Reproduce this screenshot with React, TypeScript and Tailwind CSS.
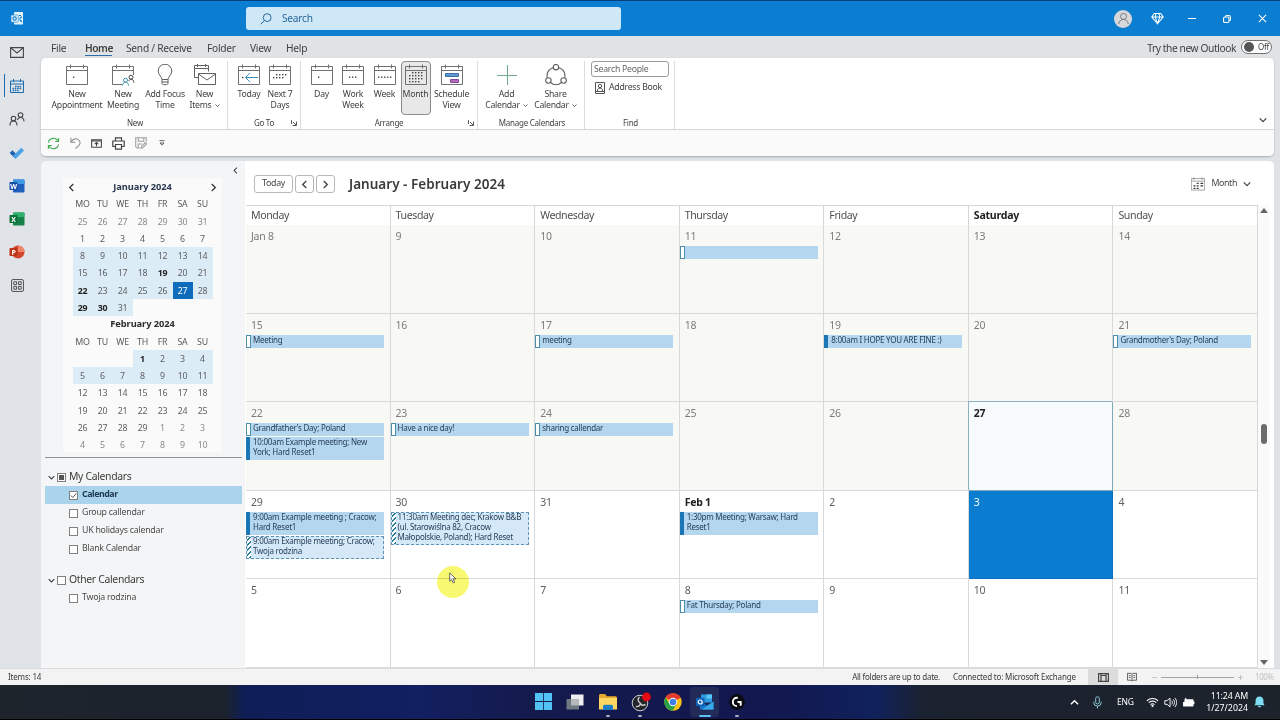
import type { ReactNode } from 'react';
import clsx from 'clsx';

type DayEvent = { text: string; kind: 'free' | 'busy' | 'tentative'; lines?: number };
type Day = { label: string; events?: DayEvent[] };

const WEEKDAYS = ['Monday', 'Tuesday', 'Wednesday', 'Thursday', 'Friday', 'Saturday', 'Sunday'];

const WEEKS: Day[][] = [
  [
    { label: 'Jan 8' },
    { label: '9' },
    { label: '10' },
    { label: '11', events: [{ text: '', kind: 'free' }] },
    { label: '12' },
    { label: '13' },
    { label: '14' },
  ],
  [
    { label: '15', events: [{ text: 'Meeting', kind: 'free' }] },
    { label: '16' },
    { label: '17', events: [{ text: 'meeting', kind: 'free' }] },
    { label: '18' },
    { label: '19', events: [{ text: '8:00am I HOPE YOU ARE FINE :)', kind: 'busy' }] },
    { label: '20' },
    { label: '21', events: [{ text: "Grandmother's Day; Poland", kind: 'free' }] },
  ],
  [
    {
      label: '22',
      events: [
        { text: "Grandfather's Day; Poland", kind: 'free' },
        { text: '10:00am Example meeting; New\nYork; Hard Reset1', kind: 'busy', lines: 2 },
      ],
    },
    { label: '23', events: [{ text: 'Have a nice day!', kind: 'free' }] },
    { label: '24', events: [{ text: 'sharing callendar', kind: 'free' }] },
    { label: '25' },
    { label: '26' },
    { label: '27' },
    { label: '28' },
  ],
  [
    {
      label: '29',
      events: [
        { text: '9:00am Example meeting ; Cracow;\nHard Reset1', kind: 'busy', lines: 2 },
        { text: '9:00am Example meeting; Cracow;\nTwoja rodzina', kind: 'tentative', lines: 2 },
      ],
    },
    {
      label: '30',
      events: [
        {
          text: '11:30am Meeting dec; Krakow B&B\n(ul. Starowiślna 82, Cracow\nMałopolskie, Poland); Hard Reset',
          kind: 'tentative',
          lines: 3,
        },
      ],
    },
    { label: '31' },
    { label: 'Feb 1', events: [{ text: '1:30pm Meeting; Warsaw; Hard\nReset1', kind: 'busy', lines: 2 }] },
    { label: '2' },
    { label: '3' },
    { label: '4' },
  ],
  [
    { label: '5' },
    { label: '6' },
    { label: '7' },
    { label: '8', events: [{ text: 'Fat Thursday; Poland', kind: 'free' }] },
    { label: '9' },
    { label: '10' },
    { label: '11' },
  ],
];

const JANUARY = [
  [25, 26, 27, 28, 29, 30, 31],
  [1, 2, 3, 4, 5, 6, 7],
  [8, 9, 10, 11, 12, 13, 14],
  [15, 16, 17, 18, 19, 20, 21],
  [22, 23, 24, 25, 26, 27, 28],
  [29, 30, 31, 0, 0, 0, 0],
];

const FEBRUARY = [
  [0, 0, 0, 1, 2, 3, 4],
  [5, 6, 7, 8, 9, 10, 11],
  [12, 13, 14, 15, 16, 17, 18],
  [19, 20, 21, 22, 23, 24, 25],
  [26, 27, 28, 29, 1, 2, 3],
  [4, 5, 6, 7, 8, 9, 10],
];

function Chevron({ dir, className }: { dir: 'left' | 'right' | 'down' | 'up'; className?: string }) {
  const d = {
    left: 'M7 1 3 5l4 4',
    right: 'M3 1l4 4-4 4',
    down: 'M1 3l4 4 4-4',
    up: 'M1 7l4-4 4 4',
  }[dir];
  return (
    <svg viewBox="0 0 10 10" className={clsx('shrink-0', className)} fill="none" stroke="currentColor" strokeWidth="1.5">
      <path d={d} />
    </svg>
  );
}

function CalendarIcon({ children, className = 'size-[22px]' }: { children?: ReactNode; className?: string }) {
  return (
    <svg viewBox="0 0 22 22" className={className} fill="none" stroke="#707070" strokeWidth="1">
      <path d="M.5 2.5h21v18H.5zM.5 6.5h21" />
      <path d="M4.5 .5v4M17.5 .5v4" />
      {children}
    </svg>
  );
}

function Dots({ xs, ys }: { xs: number[]; ys: number[] }) {
  return (
    <g fill="#444" stroke="none">
      {ys.flatMap((y) => xs.map((x) => <rect key={`${x}-${y}`} x={x} y={y} width="1.4" height="1.4" />))}
    </g>
  );
}

function RibbonButton({
  icon,
  lines,
  className,
  menu,
  active,
}: {
  icon: ReactNode;
  lines: string[];
  className: string;
  menu?: boolean;
  active?: boolean;
}) {
  return (
    <button
      className={clsx(
        'flex h-[54px] shrink-0 flex-col items-center rounded-[4px] border pt-[2px] text-[8.7px] leading-[11px]',
        active ? 'border-[#8a8a8a] bg-[#e8e8e8]' : 'border-transparent',
        className,
      )}
    >
      {icon}
      <span className="mt-[3px] whitespace-nowrap">{lines[0]}</span>
      {lines[1] && (
        <span className="flex items-center gap-[3px] whitespace-nowrap">
          {lines[1]}
          {menu && <Chevron dir="down" className="size-[5px]" />}
        </span>
      )}
    </button>
  );
}

function RibbonGroup({
  label,
  className,
  children,
  launcher,
}: {
  label: string;
  className: string;
  children: ReactNode;
  launcher?: boolean;
}) {
  return (
    <section className={clsx('flex h-[71px] shrink-0 flex-col pt-[3px]', className)}>
      <div className="flex h-[68px] flex-col border-r border-[#dcdcdc]">
        <div className="flex h-[56px] justify-center">{children}</div>
        <div className="flex h-[11px] items-center justify-center text-[8px] leading-[11px]">
          <span className={launcher ? 'ml-auto' : 'pl-[2px]'}>{label}</span>
          {launcher && (
            <span className="ml-auto flex w-0 justify-end">
              <svg viewBox="0 0 6 6" className="mr-[3px] size-[6px] shrink-0" fill="none" stroke="#444" strokeWidth=".9">
                <path d="M.5 4V.5H1M2 2l3 3M5.500 1.500v4h-4" />
              </svg>
            </span>
          )}
        </div>
      </div>
    </section>
  );
}

function TitleBar() {
  return (
    <header className="flex h-9 shrink-0 items-center border-t border-[#063f7c] bg-[#0b7ed1] text-white">
      <div className="flex w-[246px] items-center pl-[11px]">
        <svg viewBox="0 0 13 13" className="size-[13px]">
          <path d="M3 1c0-.6.4-1 1-1h7c.6 0 1 .4 1 1v10.500c0 .6-.4 1-1 1H4c-.6 0-1-.4-1-1z" fill="#e6f4fc" />
          <path d="M8 3.500h2M8.500 6.500l2.500-1.800M8.500 7.500 11 10" stroke="#0b7ed1" strokeWidth="1.100" />
          <rect x="0" y="3" width="7.200" height="7.200" rx=".8" fill="#e6f4fc" stroke="#0b7ed1" strokeWidth=".6" />
          <circle cx="3.600" cy="6.600" r="1.700" fill="none" stroke="#0b7ed1" strokeWidth="1.100" />
        </svg>
      </div>
      <div className="flex h-[23px] w-[375px] items-center gap-[10px] rounded-[3px] bg-[#cfe8f7] pl-[14px] text-[10.2px] text-[#2a6799]">
        <svg viewBox="0 0 12 12" className="size-3" fill="none" stroke="currentColor">
          <circle cx="7.200" cy="4.600" r="3.900" />
          <path d="M4.400 7.500.8 11.200" />
        </svg>
        Search
      </div>
      <div className="ml-auto flex items-center pr-[13px]">
        <div className="flex size-[18px] items-center justify-center rounded-full bg-[#d6d8da]">
          <svg viewBox="0 0 14 14" className="size-[13px]" fill="none" stroke="#70757a">
            <circle cx="7" cy="4.800" r="3.200" />
            <path d="M1.800 13c.4-3 2.400-5 5.200-5s4.800 2 5.200 5" />
          </svg>
        </div>
        <svg viewBox="0 0 14 14" className="ml-[19px] size-[13px]" fill="none" stroke="#fff" strokeWidth="1.1">
          <path d="M3.500 1.500h7l2.700 3.800L7 12.700.8 5.300zM.8 5.300h12.400M4.500 5.300 7 12.500l2.500-7.200L8.500 1.500M4.500 5.300l1-3.800" />
        </svg>
        <span className="ml-[24px] h-px w-[8px] bg-white" />
        <svg viewBox="0 0 10 10" className="ml-[27px] size-[8px]" fill="none" stroke="#fff" strokeWidth="1.400">
          <rect x=".7" y="2.500" width="6.800" height="6.800" rx="1.500" />
          <path d="M3 2.200C3 1.200 3.600.7 4.500.7h2.700c1.300 0 2.100.8 2.100 2.100v2.700c0 .9-.5 1.500-1.500 1.500" />
        </svg>
        <svg viewBox="0 0 10 10" className="ml-[27px] size-[9px]" fill="none" stroke="#fff" strokeWidth="1.200">
          <path d="m1 1 8 8M9 1 1 9" />
        </svg>
      </div>
    </header>
  );
}

function OfficeIcon({ letter, dark, mid, light, round }: { letter: string; dark: string; mid: string; light: string; round?: boolean }) {
  return (
    <svg viewBox="0 0 16 14" className="h-[14px] w-4">
      {round ? (
        <>
          <circle cx="9" cy="7" r="6.500" fill={mid} />
          <path d="M9 .5A6.500 6.500 0 0 1 15.500 7H9z" fill={light} />
        </>
      ) : (
        <>
          <rect x="4" y=".5" width="11.500" height="13" rx="1" fill={mid} />
          <path d="M4 1.500a1 1 0 0 1 1-1h9.500a1 1 0 0 1 1 1V5H4z" fill={light} />
        </>
      )}
      <rect x=".5" y="3" width="8" height="8" rx=".8" fill={dark} />
      <text x="4.600" y="9.500" fontSize="7" fontWeight="700" textAnchor="middle" fill="#fff">
        {letter}
      </text>
    </svg>
  );
}

function People({ className }: { className?: string }) {
  return (
    <svg viewBox="0 0 16 14" className={className} fill="none" stroke="currentColor" strokeWidth="1.100">
      <circle cx="4.500" cy="6.500" r="2.300" />
      <path d="M1 13.500c0-2.500 1.200-4.500 3.500-4.500S8 11 8 13.500" />
      <circle cx="11.500" cy="3" r="2.300" />
      <path d="M8.500 8c.4-1.500 1.500-2.500 3-2.500 2.200 0 3.500 1.800 3.500 4" />
    </svg>
  );
}

function AppRail() {
  const cell = 'flex h-[33.3px] w-full shrink-0 items-center justify-center';
  return (
    <nav className="flex w-[41px] shrink-0 flex-col bg-[#e0e4e8] pr-[7px] text-[#454545]">
      <div className={cell}>
        <svg viewBox="0 0 14 11" className="h-[11px] w-[14px]" fill="none" stroke="currentColor" strokeWidth="1.100">
          <path d="M.6.6h12.800v9.800H.6zM.8.8 7 6 13.200.8" />
        </svg>
      </div>
      <div className={clsx(cell, 'relative')}>
        <span className="absolute left-[4px] top-[5px] h-[23px] w-px bg-[#1c6cad]" />
        <svg viewBox="0 0 14 14" className="size-[14px]" fill="none" stroke="#1c6cad" strokeWidth="1">
          <path d="M.5 2h13v11.500H.5zM.5 5h13M3.500 0v3M10.500 0v3" />
          <path d="M5 7.500h7M2.500 9.500H12M2.500 11.500H9" strokeDasharray="1.500 .8" strokeWidth="1.400" />
        </svg>
      </div>
      <div className={cell}>
        <People className="h-[14px] w-4" />
      </div>
      <div className={cell}>
        <svg viewBox="0 0 16 12" className="h-[12px] w-4">
          <path d="M.7 6 3.400 3.300l5 5L5.700 11z" fill="#1c5fae" />
          <path d="M3.800 9.100 12.300.7 15 3.400 6.600 12z" fill="#4ba3e6" />
        </svg>
      </div>
      <div className={cell}>
        <OfficeIcon letter="W" dark="#174fa8" mid="#1e5fbe" light="#3e9ae6" />
      </div>
      <div className={cell}>
        <OfficeIcon letter="X" dark="#0e7039" mid="#15824a" light="#2fb26c" />
      </div>
      <div className={cell}>
        <OfficeIcon letter="P" dark="#bb3418" mid="#d2452b" light="#f08468" round />
      </div>
      <div className={cell}>
        <svg viewBox="0 0 14 14" className="size-[13px]" fill="none" stroke="currentColor" strokeWidth="1">
          <rect x=".6" y=".6" width="12.800" height="12.800" rx="1.500" />
          <path d="M3 3h3v3H3zM8 3h3v3H8zM3 8h3v3H3zM8 8h3v3H8z" />
        </svg>
      </div>
    </nav>
  );
}

function MenuTabs() {
  return (
    <div className="flex h-[22px] items-center pt-[2px] text-[10.2px] leading-[14px]">
      <span className="w-[34px] pl-[10px]">File</span>
      <span className="relative ml-[10px] w-[27px] font-semibold tracking-[-0.045em]">
        Home
        <i className="absolute inset-x-0 -bottom-px h-px bg-[#2d6fae]" />
      </span>
      <span className="ml-[14px] w-[81px]">Send / Receive</span>
      <span className="w-[43px]">Folder</span>
      <span className="w-[36px]">View</span>
      <span>Help</span>
      <span className="ml-auto mr-[5px] tracking-[-0.4px]">Try the new Outlook</span>
      <span className="mr-[8px] flex h-[14px] w-[31px] -translate-y-px items-center gap-[4px] rounded-full border border-[#707070] bg-white pl-[2px] text-[8px]">
        <i className="size-[10px] shrink-0 rounded-full bg-[#555]" />
        Off
      </span>
    </div>
  );
}

function Ribbon() {
  return (
    <div className="mr-[6px] h-[98px] shrink-0 overflow-hidden rounded-[5px] bg-white shadow-[0_1px_2px_rgba(0,0,0,0.25)]">
      <div className="flex h-[72px] border-b border-[#d5d5d5] pb-px">
        <RibbonGroup label="New" className="w-[187px]">
          <div className="flex w-full pl-[10px]">
            <RibbonButton
              className="w-[52px]"
              lines={['New', 'Appointment']}
              icon={
                <CalendarIcon>
                  <Dots xs={[7]} ys={[12.500]} />
                </CalendarIcon>
              }
            />
            <RibbonButton
              className="w-[40px]"
              lines={['New', 'Meeting']}
              icon={
                <svg viewBox="0 0 22 22" className="size-[22px] overflow-visible" fill="none" stroke="#707070">
                  <path d="M10 20.500H.5v-18h21V11M.5 6.500h21M4.500.5v4M17.500.5v4" />
                  <circle cx="13.500" cy="16.200" r="2" stroke="#3b8fa8" />
                  <path d="M10.500 21.700c0-2 1.200-3.500 3-3.500s3 1.500 3 3.500" stroke="#3b8fa8" />
                  <circle cx="19" cy="13.200" r="2" stroke="#444" />
                  <path d="M16.800 17.200c.4-1.200 1.200-2 2.300-2 1.700 0 2.700 1.400 2.700 3.500" stroke="#444" />
                </svg>
              }
            />
            <RibbonButton
              className="w-[44px]"
              lines={['Add Focus', 'Time']}
              icon={
                <svg viewBox="0 0 22 22" className="size-[22px]" fill="none" stroke="#606060">
                  <path d="M8 15.500c0-2.500-3.800-4.600-3.800-8.500a6.800 6.800 0 0 1 13.600 0c0 3.900-3.800 6-3.800 8.500zM8 15.500v3.500c0 1 .6 1.700 1.500 1.700h3c.9 0 1.500-.7 1.500-1.700v-3.500M8 18h6" />
                </svg>
              }
            />
            <RibbonButton
              className="w-[35px]"
              lines={['New', 'Items']}
              menu
              icon={
                <svg viewBox="0 0 22 22" className="size-[22px]" fill="none" stroke="#606060">
                  <path d="M4.500 13.500h-4v-12h14v6M.5 4.500h14M3.500 0v3M11.500 0v3" />
                  <path d="M4.500 9.500h17v11h-17zM4.500 10l8.500 6 8.500-6" />
                </svg>
              }
            />
          </div>
        </RibbonGroup>
        <RibbonGroup label="Go To" className="w-[73px]" launcher>
          <RibbonButton
            className="w-[32px]"
            lines={['Today']}
            icon={
              <CalendarIcon>
                <path d="M20 13.500H7.500M12 9l-4.500 4.500L12 18" stroke="#3d8fb8" />
                <Dots xs={[4]} ys={[12.800]} />
              </CalendarIcon>
            }
          />
          <RibbonButton
            className="w-[30px]"
            lines={['Next 7', 'Days']}
            icon={
              <CalendarIcon>
                <Dots xs={[4, 7, 10, 13]} ys={[13]} />
                <Dots xs={[7, 10, 13, 16]} ys={[10]} />
              </CalendarIcon>
            }
          />
        </RibbonGroup>
        <RibbonGroup label="Arrange" className="w-[177px]" launcher>
          <RibbonButton
            className="w-[32px]"
            lines={['Day']}
            icon={
              <CalendarIcon>
                <Dots xs={[7]} ys={[12.500]} />
              </CalendarIcon>
            }
          />
          <RibbonButton
            className="w-[31px]"
            lines={['Work', 'Week']}
            icon={
              <CalendarIcon>
                <Dots xs={[7, 10, 13]} ys={[12.500]} />
              </CalendarIcon>
            }
          />
          <RibbonButton
            className="w-[32px]"
            lines={['Week']}
            icon={
              <CalendarIcon>
                <Dots xs={[4, 7, 10, 13, 16]} ys={[12.500]} />
              </CalendarIcon>
            }
          />
          <RibbonButton
            className="w-[30px]"
            lines={['Month']}
            active
            icon={
              <CalendarIcon>
                <Dots xs={[7, 10, 13, 16]} ys={[8]} />
                <Dots xs={[4, 7, 10, 13, 16]} ys={[11, 14]} />
                <Dots xs={[4, 7, 10, 13]} ys={[17]} />
              </CalendarIcon>
            }
          />
          <RibbonButton
            className="w-[42px]"
            lines={['Schedule', 'View']}
            icon={
              <CalendarIcon>
                <path d="M4.500 9.500h13v3h-13z" fill="#5b9bd5" stroke="#41719c" />
                <path d="M9.500 15.500h8v3h-8z" fill="#b668b6" stroke="#7f4a9c" />
              </CalendarIcon>
            }
          />
        </RibbonGroup>
        <RibbonGroup label="Manage Calendars" className="w-[107px]">
          <RibbonButton
            className="w-[49px]"
            lines={['Add', 'Calendar']}
            menu
            icon={
              <svg viewBox="0 0 22 22" className="size-[22px]" stroke="#72a98d" strokeWidth="1.100">
                <path d="M11.500 1v20M1 11.500h20" />
              </svg>
            }
          />
          <RibbonButton
            className="w-[49px]"
            lines={['Share', 'Calendar']}
            menu
            icon={
              <svg viewBox="0 0 22 22" className="size-[22px]" fill="none" stroke="#606060" strokeWidth="1.100">
                <circle cx="11" cy="3.200" r="2.700" />
                <circle cx="3.400" cy="16.500" r="2.700" />
                <circle cx="18.600" cy="16.500" r="2.700" />
                <path d="M8.300 3.500C4 5 1.500 9 2.200 13.800M13.700 3.500C18 5 20.500 9 19.800 13.800M5.500 18.500c3.300 2.800 7.700 2.800 11 0" />
              </svg>
            }
          />
        </RibbonGroup>
        <RibbonGroup label="Find" className="w-[90px]">
          <div className="flex w-full flex-col pl-[6px] pr-[5px] text-[8.7px]">
            <div className="flex h-4 items-center rounded-[3px] border border-[#9c9c9c] pl-[2px] pt-px text-[#666]">Search People</div>
            <div className="mt-[4px] flex items-center gap-[4px] pl-[4px]">
              <svg viewBox="0 0 10 12" className="h-[12px] w-[10px]" fill="none" stroke="#555" strokeWidth="1">
                <path d="M.5.5h9v11h-9zM.5 9.500h9" />
                <circle cx="5" cy="4" r="1.700" />
                <path d="M2.500 9c0-2 1-3 2.500-3s2.500 1 2.500 3" />
              </svg>
              Address Book
            </div>
          </div>
        </RibbonGroup>
        <Chevron dir="down" className="mb-[4px] ml-auto mr-[7px] size-[8px] self-end" />
      </div>
      <div className="flex h-[26px] items-center bg-[#fafafa] pl-[6px]">
        <svg viewBox="0 0 14 14" className="size-[13px]" fill="none" stroke="#4fae5b" strokeWidth="1.200">
          <path d="M1.500 6A5.600 5.600 0 0 1 12 4.500M12.500 1v3.800H8.700M12.500 8A5.600 5.600 0 0 1 2 9.500M1.500 13V9.200h3.800" />
        </svg>
        <svg viewBox="0 0 12 13" className="ml-[10px] h-[12px] w-[11px]" fill="none" stroke="#8c8c8c" strokeWidth="1.100">
          <path d="M1 .8v4.800h4.800M1.200 5.400C3 2.500 6 1.200 8.600 2.500c3 1.600 3 5 1 7L6 12.500" />
        </svg>
        <svg viewBox="0 0 12 10" className="ml-[10px] h-[9px] w-[11px]" fill="none" stroke="#444" strokeWidth="1.200">
          <path d="M.6.8h10.800v8.400H.6zM.6 2.200h10.800M6 8V4M4 5.800l2-2 2 2" />
        </svg>
        <svg viewBox="0 0 13 13" className="ml-[10px] size-[13px]" fill="none" stroke="#444" strokeWidth="1.200">
          <path d="M3.500 4V.8h6V4M3.500 9.500H.8V4h11.400v5.500H9.500M3.500 7.500h6v4.700h-6z" />
        </svg>
        <svg viewBox="0 0 13 13" className="ml-[10px] size-[12px]" fill="none" stroke="#9a9a9a" strokeWidth="1.100">
          <path d="M5 12H2.200L.8 10.600V.8h11.400v4M3.500.8v3.700h6V.8M3.500 12V7.500h4M6.500 12.200l.5-2 4.200-4.200 1.400 1.400-4.200 4.200z" />
        </svg>
        <svg viewBox="0 0 6 6" className="ml-[12px] size-[6px]" fill="none" stroke="#555" strokeWidth=".9">
          <path d="M.5.7h5M1 3h4L3 5.200z" />
        </svg>
      </div>
    </div>
  );
}

function MiniMonth({ title, weeks, isShaded, isBold, isMuted, selected, nav }: {
  title: string;
  weeks: number[][];
  isShaded: (row: number, day: number) => boolean;
  isBold: (row: number, day: number) => boolean;
  isMuted: (row: number, day: number) => boolean;
  selected?: number;
  nav?: boolean;
}) {
  return (
    <div>
      <div className="flex h-[16.4px] items-center justify-between px-[4px]">
        {nav ? <Chevron dir="left" className="size-[9px]" /> : <i />}
        <span className={clsx('text-[9.3px] font-bold tracking-[-0.08px]', nav ? 'text-[#28384f]' : 'text-[#2b2b2b]')}>{title}</span>
        {nav ? <Chevron dir="right" className="size-[9px]" /> : <i />}
      </div>
      <div className="ml-[9.5px] grid w-[140px] grid-cols-7 text-center text-[8.8px]">
        {['MO', 'TU', 'WE', 'TH', 'FR', 'SA', 'SU'].map((d) => (
          <span key={d} className="h-[17.25px] leading-[18px] text-[#5a5a5a]">
            {d}
          </span>
        ))}
        {weeks.flatMap((week, row) =>
          week.map((day, col) => (
            <span
              key={`${row}-${col}`}
              className={clsx(
                'h-[17.25px] leading-[18px]',
                day > 0 && isShaded(row, day) && 'bg-[#dcecf7]',
                day > 0 && row > 0 && day === selected && 'bg-[#0f6cbd]! text-white',
                isBold(row, day) ? 'font-bold text-[#222]' : isMuted(row, day) ? 'text-[#8a8a8a]' : day !== selected && 'text-[#5f5f5f]',
              )}
            >
              {day || ''}
            </span>
          )),
        )}
      </div>
    </div>
  );
}

function CheckBox({ state }: { state?: 'checked' | 'mixed' }) {
  return (
    <span className="flex size-[9px] shrink-0 items-center justify-center border border-[#808080] bg-white">
      {state === 'mixed' && <i className="size-[5px] bg-[#555]" />}
      {state === 'checked' && (
        <svg viewBox="0 0 8 8" className="size-[7px]" fill="none" stroke="#444">
          <path d="m1 4 2.200 2.300L7.200 1.500" />
        </svg>
      )}
    </span>
  );
}

function CalendarRow({ name, checked }: { name: string; checked?: boolean }) {
  return (
    <div className={clsx('flex h-[18px] items-center gap-[4px] pl-[24px] text-[8.8px] text-[#4c4c4c]', checked && 'bg-[#aad3ec]')}>
      <CheckBox state={checked ? 'checked' : undefined} />
      <span className={checked ? 'font-bold tracking-[-0.45px] text-[#1f3a52]' : ''}>{name}</span>
    </div>
  );
}

function Sidebar() {
  return (
    <aside className="flex w-[204px] shrink-0 flex-col bg-[#f4f5f6] pl-[4px] pr-[3px] text-[#3c3c3c]">
      <Chevron dir="left" className="mr-[3px] mt-[6px] size-[7px] self-end" />
      <div className="ml-[18px] mt-[4px] h-[274px] w-[159px] bg-[#fafafb] pt-px">
        <MiniMonth
          title="January 2024"
          weeks={JANUARY}
          nav
          selected={27}
          isShaded={(row) => row > 1}
          isBold={(row, day) => row > 1 && [19, 22, 29, 30].includes(day)}
          isMuted={(row) => row === 0}
        />
        <MiniMonth
          title="February 2024"
          weeks={FEBRUARY}
          isShaded={(row) => row < 2}
          isBold={(row, day) => row === 0 && day === 1}
          isMuted={(row, day) => row > 3 && day < 11}
        />
      </div>
      <div className="mt-[5px] h-px bg-[#8d9199]" />
      <div className="mt-[10px] flex h-[18px] items-center pl-[3px] text-[10.4px] tracking-[-0.32px]">
        <Chevron dir="down" className="mr-[2px] size-[7px]" />
        <CheckBox state="mixed" />
        <span className="ml-[3px]">My Calendars</span>
      </div>
      <CalendarRow name="Calendar" checked />
      <CalendarRow name="Group callendar" />
      <CalendarRow name="UK holidays calendar" />
      <CalendarRow name="Blank Calendar" />
      <div className="mt-[13px] flex h-[18px] items-center pl-[3px] text-[10.4px] tracking-[-0.32px]">
        <Chevron dir="down" className="mr-[2px] size-[7px]" />
        <CheckBox />
        <span className="ml-[3px]">Other Calendars</span>
      </div>
      <CalendarRow name="Twoja rodzina" />
    </aside>
  );
}

function EventBlock({ event }: { event: DayEvent }) {
  const { kind, lines = 1, text } = event;
  return (
    <div
      className={clsx(
        'flex w-[138px] overflow-hidden text-[8px] leading-[10px] text-[#263f57]',
        lines === 1 && 'h-[13px]',
        lines === 2 && 'h-[23px]',
        lines === 3 && 'h-[33px]',
        kind === 'tentative' ? 'border border-dashed border-[#5f93b4] bg-[#d4e8f8]' : 'bg-[#b5d6ef]',
      )}
    >
      <i
        className={clsx(
          'shrink-0',
          kind === 'free' && 'w-[5px] border border-[#4d8fa8] bg-white',
          kind === 'busy' && 'w-[4px] bg-[#1b76b8]',
          kind === 'tentative' && 'w-[4px] bg-[repeating-linear-gradient(135deg,#fff_0_2px,#2c7c9c_2px_3.500px)]',
        )}
      />
      <span className={clsx('whitespace-pre', kind === 'free' ? 'pl-[2px]' : kind === 'busy' ? 'pl-[3px]' : '-mt-px pl-[2px]')}>{text}</span>
    </div>
  );
}

function MonthGrid() {
  return (
    <div className="ml-px flex h-[463px] w-[1012px] shrink-0 flex-col border-t border-[#d6d6d6]">
      <div className="grid h-[19px] grid-cols-7 text-[10.6px] leading-[19px] tracking-[-0.4px] text-[#505050]">
        {WEEKDAYS.map((d) => (
          <span key={d} className={clsx('border-r border-[#d6d6d6] pl-[5px]', d === 'Saturday' && 'font-bold tracking-[-0.25px] text-[#222]')}>
            {d}
          </span>
        ))}
      </div>
      <div className="grid flex-1 grid-cols-7 grid-rows-5">
        {WEEKS.flatMap((week, w) =>
          week.map((day, d) => {
            const today = w === 2 && d === 5;
            const selected = w === 3 && d === 5;
            const strong = today || day.label === 'Feb 1';
            return (
              <div
                key={`${w}-${d}`}
                className={clsx(
                  'flex flex-col gap-px overflow-hidden border-b border-r',
                  today && 'border-b-[#7da9b8] border-r-[#7da9b8] bg-[#f8fbfd] shadow-[-1px_-1px_0_#8cb0bd]',
                  selected && 'border-[#0a70bf] bg-[#0b7dd0] text-white',
                  !today && !selected && 'border-[#d9d9d9]',
                  !today && !selected && w < 3 && 'bg-[#f8f8f5]',
                )}
              >
                <span
                  className={clsx(
                    'h-[20px] shrink-0 pl-[5px] pt-[2px] text-[10.5px] leading-[19px]',
                    strong && 'font-bold text-[#222]',
                    !strong && !selected && (w < 3 ? 'text-[#7c7c7c]' : 'text-[#5e5e5e]'),
                  )}
                >
                  {day.label}
                </span>
                {day.events?.map((event) => <EventBlock key={event.text} event={event} />)}
              </div>
            );
          }),
        )}
      </div>
    </div>
  );
}

function CalendarPane() {
  const btn = 'flex h-[18px] items-center justify-center rounded-[3px] border border-[#b8b8b8] bg-white';
  return (
    <main className="flex min-w-0 flex-1 flex-col bg-white text-[#444]">
      <div className="flex h-[44px] shrink-0 items-center pl-[9px] pr-[23px] pt-[2px]">
        <button className={clsx(btn, 'w-[39px] text-[8.8px]')}>Today</button>
        <button className={clsx(btn, 'ml-[2px] w-[19px]')}>
          <Chevron dir="left" className="size-[9px]" />
        </button>
        <button className={clsx(btn, 'ml-[2px] w-[19px]')}>
          <Chevron dir="right" className="size-[9px]" />
        </button>
        <h1 className="ml-[14px] text-[13.5px] font-semibold tracking-[0.02px] text-[#3a3a3a]">January - February 2024</h1>
        <CalendarIcon className="ml-auto size-[14px]">
          <g stroke="#333" strokeWidth="2">
            <path d="M9 10h3M15 10h4M4 14h3M9 14h3M15 14h4M4 18h3M9 18h3" />
          </g>
        </CalendarIcon>
        <span className="ml-[6px] mr-[6px] text-[8.8px] tracking-[-0.35px]">Month</span>
        <Chevron dir="down" className="size-[8px]" />
      </div>
      <div className="flex min-h-0 flex-1">
        <MonthGrid />
        <div className="flex w-[12px] flex-col items-center bg-[#fafafa] py-[3px]">
          <i className="size-0 border-x-[4px] border-b-[5px] border-x-transparent border-b-[#666]" />
          <i className="mt-[211px] h-[20px] w-[6px] rounded-[3px] bg-[#6b6b6b]" />
          <i className="mt-auto size-0 border-x-[4px] border-t-[5px] border-x-transparent border-t-[#666]" />
        </div>
      </div>
    </main>
  );
}

function StatusBar() {
  return (
    <footer className="flex h-[17px] shrink-0 items-center border-t border-[#dadcde] bg-[#f3f3f3] pl-[8px] text-[8px] tracking-[-0.17px] text-[#3a3a3a]">
      <span>Items: 14</span>
      <span className="ml-auto tracking-[-0.25px]">All folders are up to date.</span>
      <span className="ml-[13px] w-[123px] whitespace-nowrap">Connected to: Microsoft Exchange</span>
      <span className="ml-[12px] flex h-full w-[30px] items-center justify-center bg-[#dcdcdc]">
        <svg viewBox="0 0 11 9" className="h-[9px] w-[11px]" fill="none" stroke="#444" strokeWidth="1.200">
          <path d="M.6.6h9.800v7.800H.6zM3 .6v7.800M8 .6v7.800M3 2.500h5" />
        </svg>
      </span>
      <svg viewBox="0 0 11 10" className="ml-[9px] h-[10px] w-[10px]" fill="none" stroke="#555">
        <path d="M.5 1h4l1 1 1-1h4v7.500h-4l-1 1-1-1h-4zM5.500 2v7M2 3.500h2M2 5.500h2M7 3.500h2M7 5.500h2" />
      </svg>
      <div className="ml-[15px] flex w-[94px] items-center gap-[4px] text-[#c3c3c3]">
        <i className="h-px w-[5px] bg-[#c8c8c8]" />
        <span className="flex h-[4px] w-[73px] items-center justify-center bg-[linear-gradient(#a5a5a5,#a5a5a5)] bg-[length:100%_1px] bg-center bg-no-repeat">
          <i className="h-full w-px bg-[#999]" />
        </span>
        <svg viewBox="0 0 5 5" className="size-[5px]" stroke="#c3c3c3">
          <path d="M2.500 0v5M0 2.500h5" />
        </svg>
      </div>
      <span className="ml-[9px] w-[25px] tracking-[-0.4px] text-[#c0c0c0]">100%</span>
    </footer>
  );
}

function TaskIcon({ children, running, active }: { children: ReactNode; running?: boolean; active?: boolean }) {
  return (
    <div className="flex w-[32.3px] justify-center">
      <div className={clsx('relative flex h-[30px] w-[29px] items-center justify-center rounded-[4px] pb-px', active && 'bg-[#222b58]')}>
        {children}
        {running && (
          <span
            className={clsx(
              'absolute bottom-0 h-[2px] rounded-full',
              active ? 'w-[12px] bg-[#5fc0ee]' : 'w-[4px] bg-[#a8adbd]',
            )}
          />
        )}
      </div>
    </div>
  );
}

function Taskbar() {
  return (
    <div className="flex h-[35px] shrink-0 items-center border-b border-black bg-[linear-gradient(90deg,#1d242c_0,#1b222c_225px,#0f1d57_245px,#121f60_420px,#141a4c_530px,#121850_780px,#10215c_875px,#1b222f_925px,#1c232b_1280px)] text-white">
      <div className="flex pl-[527px]">
        <TaskIcon>
          <svg viewBox="0 0 17 17" className="size-[17px]">
            <path d="M0 0h8.100v8.100H0zM8.900 0H17v8.100H8.900zM0 8.900h8.100V17H0zM8.900 8.900H17V17H8.900z" fill="#51c2f3" />
          </svg>
        </TaskIcon>
        <TaskIcon>
          <svg viewBox="0 0 18 16" className="h-4 w-[18px]">
            <rect x="5" y=".5" width="12.500" height="11" fill="#eceef0" />
            <rect x=".5" y="5" width="12.500" height="10.500" fill="#707882" />
            <rect x="5" y="5" width="8" height="6.500" fill="#b4b9be" />
          </svg>
        </TaskIcon>
        <TaskIcon running>
          <svg viewBox="0 0 18 16" className="h-4 w-[18px]">
            <path d="M0 1.500C0 .7.700 0 1.500 0H6l2 2.200h8.500c.8 0 1.500.7 1.500 1.500V14H0z" fill="#e8a92c" />
            <path d="M0 4h18v11.500H0z" fill="#fbd660" />
            <path d="M4 16v-3.500c0-1 .7-1.700 1.700-1.700h6.600c1 0 1.700.7 1.700 1.700V16z" fill="#1d7dc4" />
          </svg>
        </TaskIcon>
        <TaskIcon running>
          <svg viewBox="0 0 20 20" className="ml-[2px] size-[20px] shrink-0">
            <circle cx="9" cy="11" r="7.800" fill="#222429" stroke="#c9cbcf" strokeWidth="1" />
            <path d="M8.500 5c-2 1.800-1.800 5 .6 5.800M14.500 12.500c-2.500 1.500-5.300.2-5.200-1.700M5 14.500c2.800.6 4.800-1.500 4.200-3.700" stroke="#c9cbcf" strokeWidth="1.500" fill="none" />
            <circle cx="15.500" cy="5" r="4.400" fill="#e50914" />
          </svg>
        </TaskIcon>
        <TaskIcon>
          <svg viewBox="0 0 18 18" className="ml-[2px] size-[18px]">
            <circle cx="9" cy="9" r="8.700" fill="#fbc116" />
            <path d="M9 9 1.500 4.600A8.700 8.700 0 0 1 16.600 4.700z" fill="#e33b2e" />
            <path d="M9 .3a8.700 8.700 0 0 1 7.600 4.600H9z" fill="#e33b2e" />
            <path d="M1.500 4.600A8.700 8.700 0 0 0 8.500 17.700L12.500 11 5.500 11z" fill="#27a149" />
            <circle cx="9" cy="9" r="4.200" fill="#fff" />
            <circle cx="9" cy="9" r="3.300" fill="#3f7fe8" />
          </svg>
        </TaskIcon>
        <TaskIcon running active>
          <svg viewBox="0 0 18 16" className="h-4 w-[18px]">
            <path d="M5 .5h11v8H5z" fill="#2f9be0" />
            <path d="M10.500.5H16v4h-5.500z" fill="#55c8f5" />
            <path d="M4 7.500l7 4 6.500-4v8H4z" fill="#1674c9" />
            <path d="M17.500 7.500v8H6z" fill="#39a9ea" />
            <rect x="0" y="3.800" width="8.500" height="8.500" rx="1" fill="#0f62b5" />
            <circle cx="4.250" cy="8" r="2" fill="none" stroke="#fff" strokeWidth="1.200" />
          </svg>
        </TaskIcon>
        <TaskIcon running>
          <svg viewBox="0 0 16 16" className="size-4">
            <circle cx="8" cy="8" r="7.900" fill="#0a0b10" />
            <path d="M8.800 3.800H8a4.100 4.100 0 0 0 0 8.300M8.500 8h3.200v3.800" fill="none" stroke="#fff" strokeWidth="1.900" />
          </svg>
        </TaskIcon>
      </div>
      <div className="ml-auto flex items-center text-[8.8px]">
        <Chevron dir="up" className="size-[9px]" />
        <svg viewBox="0 0 10 14" className="ml-[14px] h-[13px] w-[9px]" fill="none" stroke="#8fc9d8" strokeWidth="1.100">
          <rect x="3" y=".6" width="4" height="8" rx="2" />
          <path d="M.8 6v.8a4.200 4.200 0 0 0 8.400 0V6M5 11v2.500" />
        </svg>
        <span className="ml-[15px] w-[18px] text-[8.500px]">ENG</span>
        <svg viewBox="0 0 14 11" className="ml-[11px] h-[10px] w-[13px]" fill="none" stroke="#fff" strokeWidth="1.200">
          <path d="M.8 4.200a9 9 0 0 1 12.400 0M2.800 6.300a6 6 0 0 1 8.400 0M4.800 8.300a3 3 0 0 1 4.400 0" />
          <circle cx="7" cy="9.800" r=".6" />
        </svg>
        <svg viewBox="0 0 14 12" className="ml-[5px] h-[11px] w-[13px]" fill="none" stroke="#fff">
          <path d="M.8 4h2.500L6.500 1.200v9.600L3.300 8H.8zM8.300 4c1 1.200 1 2.800 0 4M10 2.500c1.800 2 1.800 5 0 7M11.800 1c2.500 3 2.500 7 0 10" />
        </svg>
        <svg viewBox="0 0 14 11" className="ml-[5px] h-[10px] w-[13px]" fill="#fff">
          <path d="M1 5.500h1.500V3L4 .5l1 2h6.500c.8 0 1 .5 1 1V5h1v3h-1v1.500c0 .6-.4 1-1 1H2c-.6 0-1-.4-1-1z" />
        </svg>
        <div className="ml-[10px] w-[43px] text-right leading-[12px] tracking-[0px]">
          <div className="whitespace-nowrap tracking-[-0.15px]">11:24 AM</div>
          <div className="whitespace-nowrap">1/27/2024</div>
        </div>
        <svg viewBox="0 0 12 13" className="ml-[6px] mr-[15px] h-[12px] w-[11px]" fill="#80dcf3">
          <path d="M6 .5c2.700 0 4.300 2 4.300 4.500v2.800l1.200 2.200H.5l1.200-2.200V5C1.700 2.500 3.300.5 6 .5zM4.200 10.800h3.600c-.2 1-.9 1.500-1.800 1.500s-1.600-.5-1.800-1.500z" />
        </svg>
      </div>
    </div>
  );
}

function Pointer() {
  return (
    <div className="absolute left-[437px] top-[566px] size-[32px] rounded-full bg-[#f9f871] mix-blend-multiply">
      <svg viewBox="0 0 9 13" className="absolute left-[12px] top-[6px] h-[12px] w-[8px]" fill="#fff" stroke="#444" strokeWidth=".9">
        <path d="M.8.800v9.400l2.200-2 1.600 3.800 1.700-.7L4.700 7.500h3z" />
      </svg>
    </div>
  );
}

export default function App() {
  return (
    <div className="relative flex h-[720px] w-[1280px] flex-col overflow-hidden bg-[#e0e3e6] font-['Noto_Sans','Open_Sans',sans-serif] tracking-[-0.25px] text-[#3f3f3f]">
      <TitleBar />
      <div className="flex min-h-0 flex-1">
        <AppRail />
        <div className="flex min-w-0 flex-1 flex-col">
          <MenuTabs />
          <Ribbon />
          <div className="mr-[6px] mt-[5px] flex min-h-0 flex-1 overflow-hidden rounded-t-[5px]">
            <Sidebar />
            <CalendarPane />
          </div>
        </div>
      </div>
      <StatusBar />
      <Taskbar />
      <Pointer />
    </div>
  );
}
